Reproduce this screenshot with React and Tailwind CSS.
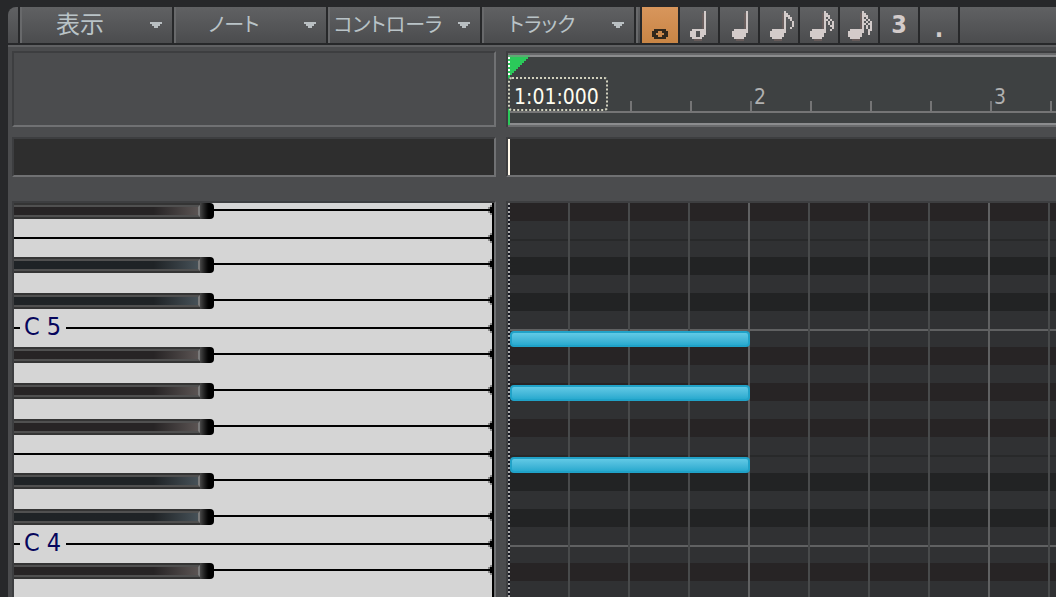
import React, { useState } from 'react';

const MENUS = ['表示', 'ノート', 'コントローラ', 'トラック'];

// Note glyphs are drawn on a coarse grid, [x, y, width, height] per block
const RING = [[6, 11, 6, 1], [5, 12, 3, 1], [10, 12, 3, 1], [5, 13, 2, 1], [11, 13, 2, 1], [5, 14, 3, 1], [10, 14, 3, 1], [6, 15, 6, 1]];
const HOLLOW = [[6, 11, 6, 1], [5, 12, 3, 1], [10, 12, 3, 1], [5, 13, 3, 1], [10, 13, 3, 1], [5, 14, 3, 1], [10, 14, 2, 1], [6, 15, 5, 1]];
const SOLID = [[6, 11, 6, 1], [5, 12, 8, 1], [5, 13, 7, 1], [5, 14, 7, 1], [6, 15, 5, 1]];
const STEM = [12, 2, 1, 11];
const GLYPHS = {
  whole: RING,
  half: [STEM, ...HOLLOW],
  quarter: [STEM, ...SOLID],
  eighth: [STEM, ...SOLID, [13, 3, 1, 2], [14, 4, 1, 2], [15, 5, 1, 2], [16, 7, 1, 3], [15, 10, 1, 1]],
  sixteenth: [STEM, ...SOLID, [13, 3, 1, 2], [14, 4, 1, 2], [15, 6, 1, 1], [13, 6, 1, 1], [14, 7, 1, 2], [15, 9, 1, 1], [16, 7, 1, 4], [15, 11, 1, 1]],
  thirtySecond: [STEM, ...SOLID, [13, 3, 1, 2], [14, 4, 1, 2], [15, 6, 1, 1], [13, 6, 1, 1], [14, 7, 1, 1], [15, 8, 1, 1], [16, 7, 1, 5], [13, 8, 1, 1], [14, 9, 1, 2], [15, 11, 1, 3]],
};
const VIEW_BOXES = { quarter: '-1 0 18 18', thirtySecond: '1 0 18 18' };

const LENGTHS = [
  { id: 'whole', label: 'Whole note' },
  { id: 'half', label: 'Half note' },
  { id: 'quarter', label: 'Quarter note' },
  { id: 'eighth', label: 'Eighth note' },
  { id: 'sixteenth', label: 'Sixteenth note' },
  { id: 'thirtySecond', label: 'Thirty-second note' },
];

const TOP_PITCH = 78;
const PITCHES = Array.from({ length: 22 }, (_, i) => TOP_PITCH - i);
const NOTES = [71, 68, 64];
const BEATS = Array.from({ length: 40 }, (_, i) => i + 1);
const BAR_STARTS = { 5: 2, 9: 3 };

const WARM = [6, 8, 10];
const COOL = [1, 3];
const isBlack = (step) => WARM.includes(step) || COOL.includes(step);

const rowColor = (step) => {
  if (WARM.includes(step)) return 'bg-[#272425]';
  if (COOL.includes(step)) return 'bg-[#222324]';
  if (step === 11) return 'bg-[#303133] border-t-2 border-[#606162]';
  if (step === 4) return 'bg-[#303133] border-t-2 border-[#28292a]';
  return 'bg-[#303133]';
};

const NoteGlyph = ({ name }) => (
  <svg className="block w-9 h-9" viewBox={VIEW_BOXES[name] || '0 0 18 18'} fill="currentColor" shapeRendering="crispEdges" aria-hidden="true">
    {name !== 'whole' && <path d="M11 3h1v8h-1zM7 16h4v1h-4z" fill="#7a6460" opacity="0.55" />}
    {GLYPHS[name].map(([x, y, w, h]) => (
      <rect key={`${x}-${y}`} x={x} y={y} width={w} height={h} />
    ))}
  </svg>
);

const MenuButton = ({ label }) => (
  <button
    type="button"
    aria-haspopup="menu"
    className="flex items-center w-[154px] h-9 shrink-0 border-l-2 border-l-[#68696b] border-r-2 border-r-[#27282a] text-[#b9c3c7]"
  >
    <span className={`flex-1 text-center whitespace-nowrap leading-9 [font-feature-settings:'palt'] ${label === '表示' ? 'text-[24px]' : 'text-[20px]'}`}>
      {label}
    </span>
    <svg className="w-3 h-1.5 mr-2.5 ml-3 shrink-0" viewBox="0 0 6 3" shapeRendering="crispEdges" aria-hidden="true">
      <path d="M0 0h6v1h-1v1h-1v1h-2v-1h-1v-1h-1z" fill="#b9bfc2" />
    </svg>
  </button>
);

const ToolButton = ({ label, active, onClick, children }) => (
  <button
    type="button"
    aria-label={label}
    aria-pressed={active}
    onClick={onClick}
    className={`flex w-10 h-9 first:w-[38px] shrink-0 border-r-2 border-[#27282a] ${active ? 'bg-linear-to-b from-[#d8965c] to-[#c98545] text-[#33281c]' : 'text-[#d3cbca]'}`}
  >
    {children}
  </button>
);

const Toolbar = () => {
  const [length, setLength] = useState('whole');

  return (
    <header className="border-b-2 border-[#27282a] rounded-tl-lg overflow-hidden">
      <div className="flex h-9 bg-linear-to-b from-[#606163] to-[#4b4c4e]">
        <div className="w-3 shrink-0 border-r-2 border-[#27282a]" />
        {MENUS.map(label => <MenuButton key={label} label={label} />)}
        <div className="w-1.5 shrink-0 border-l-2 border-[#68696b] border-r-2 border-r-[#27282a]" />
        <div className="flex">
          {LENGTHS.map(({ id, label }) => (
            <ToolButton key={id} label={label} active={length === id} onClick={() => setLength(id)}>
              <NoteGlyph name={id} />
            </ToolButton>
          ))}
          <ToolButton label="Triplet">
            <span className="flex-1 text-center text-[25px] font-bold leading-9">3</span>
          </ToolButton>
          <ToolButton label="Dotted">
            <span className="flex-1 text-center text-[25px] font-bold leading-[44px]">.</span>
          </ToolButton>
        </div>
      </div>
    </header>
  );
};

const Ruler = () => (
  <div className="relative flex-1 min-w-0 h-[76px] overflow-hidden bg-[#3e4142] border-l-2 border-t-2 border-[#3d3e40]">
    <div className="h-1 border-t-2 border-[#68696b] bg-[#8b8c8e]" />
    <div className="flex items-end h-14 pl-1 border-b-2 border-[#757576]">
      {BEATS.map(beat => (
        <div key={beat} className="flex flex-col justify-end relative w-15 h-full shrink-0">
          {BAR_STARTS[beat] && (
            <span className="pl-0.5 text-[21px] leading-7 text-[#b0b0b0]">{BAR_STARTS[beat]}</span>
          )}
          <i className="absolute right-0 bottom-0 w-0.5 h-2.5 bg-[#757576]" />
        </div>
      ))}
    </div>
    <div className="h-3.5 border-b-2 border-[#6b6c6e]">
      <div className="h-3 border-b-2 border-[#8b8c8e]" />
    </div>
    <svg className="absolute left-0 top-0.5 w-6 h-[72px]" viewBox="0 0 12 36" shapeRendering="crispEdges" aria-hidden="true">
      <path d="M0 0h11v1h-11z" fill="#5faa74" />
      <path d="M0 1h10v1h-1v1h-1v1h-1v1h-1v1h-1v1h-1v1h-1v1h-1v1h-1v25h-1z" fill="#2bc95a" />
      <path d="M0.500 1v10" stroke="#fff" strokeDasharray="1 1" />
    </svg>
    <time className="absolute left-0 top-6 w-25 h-[34px] pl-1 rounded border-2 border-dotted border-[#d0d0bd] bg-[#3e4142] text-[21px] leading-9 text-[#fffdf0]">
      1:01:000
    </time>
  </div>
);

const Key = ({ pitch }) => {
  const step = pitch % 12;
  const black = isBlack(step);
  const hasLine = black || step === 0 || step === 5;

  return (
    <div className="relative flex h-[18px] shrink-0">
      {black && (
        <div className="flex w-50 h-4">
          <div className={`w-[186px] border-y-2 border-[#343434] ${step > 5 ? 'bg-linear-to-r from-[#272425] from-75% to-[#5d5655]' : 'bg-linear-to-r from-[#1f2326] from-75% to-[#48535a]'}`}>
            <div className="h-3 border-y-2 border-r-2 border-y-[#505050] border-r-[#7a7a7a]" />
          </div>
          <div className="w-3.5 rounded-r bg-linear-to-r from-[#484848] to-black to-80%" />
        </div>
      )}
      {hasLine && (
        <div className={`flex items-center flex-1 ${black ? 'h-3.5' : 'self-end h-2.5 -mb-1'}`}>
          {step === 0 && (
            <>
              <i className="w-1.5 h-0.5 bg-black" />
              <span className="w-[46px] pl-1 pb-0.5 text-[25px] leading-6 whitespace-nowrap text-[#06065c]">
                C {pitch / 12 - 1}
              </span>
            </>
          )}
          <i className="flex-1 h-0.5 bg-black" />
          <svg className="w-1 h-2.5" viewBox="0 0 2 5" shapeRendering="crispEdges" aria-hidden="true">
            <path d="M0 1h1v3h-1zM1 0h1v5h-1z" fill="#888" />
            <path d="M0 2h1v1h-1zM1 1h1v3h-1z" />
          </svg>
        </div>
      )}
    </div>
  );
};

const Keyboard = () => (
  <div className="w-[484px] shrink-0 overflow-hidden border-2 border-b-0 border-[#3d3e40] border-r-[#707173]">
    <div className="flex flex-col bg-[#d5d5d5] border-r-2 border-black">
      {PITCHES.map(pitch => <Key key={pitch} pitch={pitch} />)}
    </div>
  </div>
);

const PianoRoll = () => (
  <div className="relative flex-1 min-w-0 overflow-hidden border-l-2 border-t-2 border-[#3d3e40]">
    {PITCHES.map(pitch => (
      <div key={pitch} className={`h-[18px] ${rowColor(pitch % 12)}`} />
    ))}
    <div className="absolute inset-0 flex">
      <div className="w-0.5 shrink-0 bg-[repeating-linear-gradient(to_bottom,#aaa_0_2px,#12141f_2px_4px)]" />
      {BEATS.map(beat => (
        <div key={beat} className={`w-15 shrink-0 border-r-2 ${beat % 4 === 0 ? 'border-[#606162]' : 'border-[#484a4b]'}`} />
      ))}
    </div>
    {NOTES.map(pitch => (
      <div
        key={pitch}
        className="absolute left-0.5 w-60 h-4 rounded border-2 border-[#20a2c8] bg-linear-to-b from-[#61c9e5] to-[#28aacf]"
        style={{ top: (TOP_PITCH - pitch) * 18 + 2 }}
      />
    ))}
  </div>
);

const App = () => (
  <div className="flex flex-col h-screen pt-[7px] pl-2 overflow-hidden bg-[#27282a] font-['DejaVu_Sans_Condensed','Noto_Sans','Noto_Sans_CJK_JP',sans-serif]">
    <Toolbar />
    <main className="flex flex-col flex-1 min-h-0 pt-1 pl-1 border-t-2 border-[#606163] bg-[#4b4c4e]">
      <div className="flex gap-2.5 mb-2.5">
        <div className="w-[484px] h-[76px] shrink-0 border-2 border-[#3d3e40] border-r-[#707173] border-b-[#707173]" />
        <Ruler />
      </div>
      <div className="flex gap-2.5 mb-6">
        <div className="w-[484px] h-10 shrink-0 border-2 border-[#3d3e40] border-r-[#707173] border-b-[#707173] bg-[#2e2e2e]" />
        <div className="flex-1 h-10 border-l-2 border-y-2 border-[#3d3e40] border-b-[#707173] bg-[#2e2e2e]">
          <div className="w-0.5 h-full bg-[#fff8ea]" />
        </div>
      </div>
      <div className="flex flex-1 min-h-0 gap-2.5">
        <Keyboard />
        <PianoRoll />
      </div>
    </main>
  </div>
);

export default App;
